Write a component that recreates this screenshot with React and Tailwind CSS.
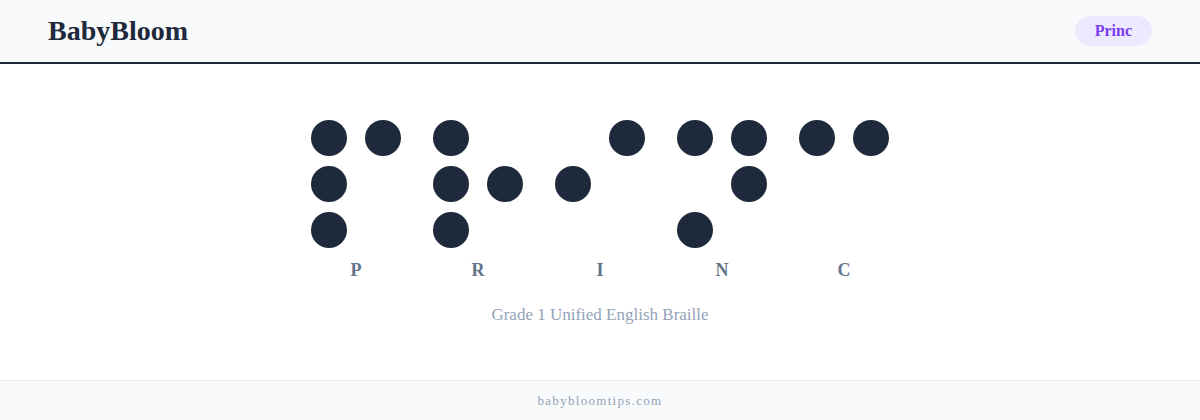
const cells = [
  { letter: "P", dots: [1, 2, 3, 4] },
  { letter: "R", dots: [1, 2, 3, 5] },
  { letter: "I", dots: [2, 4] },
  { letter: "N", dots: [1, 3, 4, 5] },
  { letter: "C", dots: [1, 4] },
];

// grid order: row by row, left then right -> braille dot numbers
const gridOrder = [1, 4, 2, 5, 3, 6];

function BrailleCell({ letter, dots }) {
  return (
    <div className="flex flex-col items-center">
      <div className="grid grid-cols-[36px_36px] gap-x-[18px] gap-y-[10px]">
        {gridOrder.map((n) => (
          <div
            key={n}
            className={`h-9 w-9 rounded-full ${
              dots.includes(n) ? "bg-[#1e293b]" : "bg-transparent"
            }`}
          />
        ))}
      </div>
      <span className="mt-[10px] text-[18px] font-semibold leading-6 text-[#64748b]">
        {letter}
      </span>
    </div>
  );
}

export default function App() {
  return (
    <div
      className="flex min-h-screen flex-col bg-white"
      style={{ fontFamily: '"Liberation Serif", "DejaVu Serif", serif' }}
    >
      <header className="flex h-16 items-center justify-between border-b-2 border-[#1e293b] bg-[#f8fafc] px-12">
        <h1 className="text-[28px] font-bold leading-none text-[#1e293b]">
          BabyBloom
        </h1>
        <span className="flex h-[30px] items-center rounded-full bg-[#ede9fe] px-5 text-[16px] font-semibold text-[#7c3aed]">
          Princ
        </span>
      </header>

      <main className="flex flex-1 flex-col items-center pt-14">
        <div className="flex gap-8">
          {cells.map((c) => (
            <BrailleCell key={c.letter} letter={c.letter} dots={c.dots} />
          ))}
        </div>
        <p className="mt-[21px] text-[17px] leading-6 text-[#94a3b8]">
          Grade 1 Unified English Braille
        </p>
      </main>

      <footer className="flex h-10 items-center justify-center border-t border-[#e2e8f0] bg-[#f8fafc]">
        <span className="text-[13px] tracking-[0.1em] text-[#94a3b8]">
          babybloomtips.com
        </span>
      </footer>
    </div>
  );
}
